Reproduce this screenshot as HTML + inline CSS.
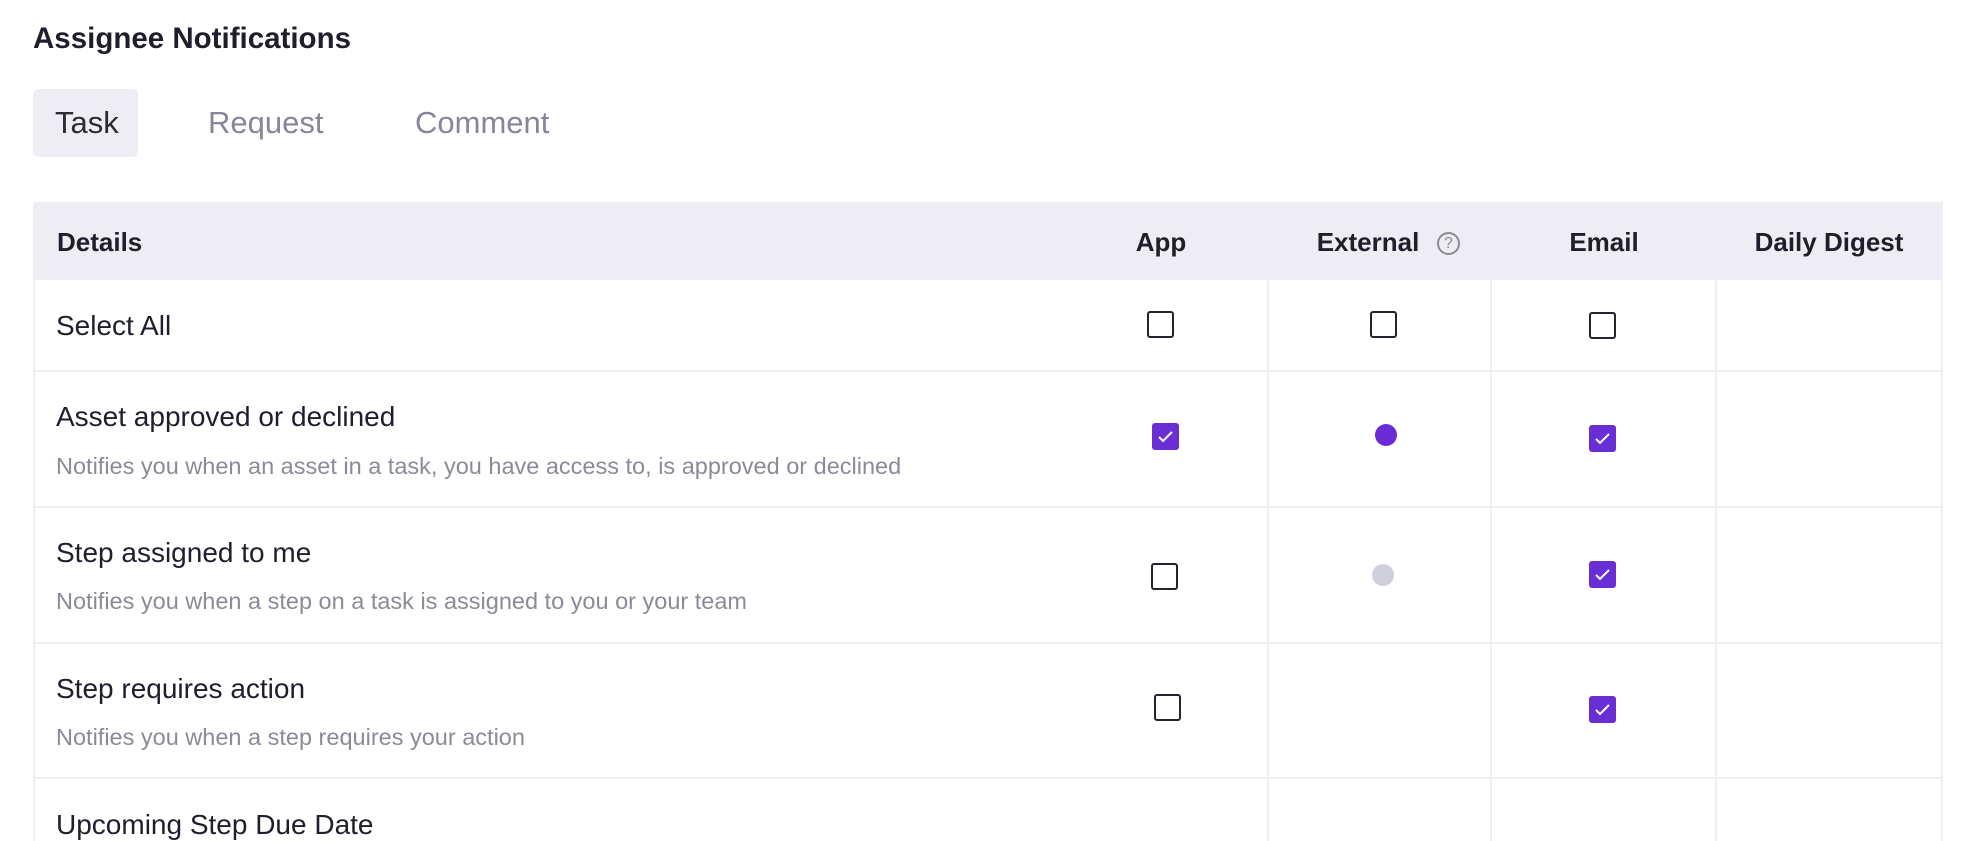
<!DOCTYPE html>
<html><head><meta charset="utf-8"><style>
*{margin:0;padding:0;box-sizing:border-box}
body{width:1968px;height:841px;background:#fff;font-family:"Liberation Sans",sans-serif;color:#1e1e2d;position:relative;overflow:hidden}
.a{position:absolute}
.t{position:absolute;white-space:nowrap}
.cb{position:absolute;width:27px;height:27px;border:2.5px solid #24242f;border-radius:3px;background:#fff}
.ck{position:absolute;width:27px;height:27px;border-radius:3px;background:#6a2fd4}
.ck svg{position:absolute;left:4px;top:4px}
.dot{position:absolute;width:22px;height:22px;border-radius:50%}
.hl{position:absolute;left:33px;width:1910px;height:2px;background:#efeff3}
.vl{position:absolute;top:280px;width:2px;height:561px;background:#efeff3}
.title{font-size:28px;color:#1e1e2d}
.sub{font-size:23.5px;color:#8b8b98}
.hd{font-size:26px;font-weight:bold;color:#1e1e2d;transform:translateX(-50%)}
</style></head><body>
<div class="t" style="left:33px;top:22px;font-size:29.5px;font-weight:bold">Assignee Notifications</div>
<div class="a" style="left:33px;top:89px;width:105px;height:68px;background:#ededf3;border-radius:5px"></div>
<div class="t" style="left:55px;top:105px;font-size:31px;color:#2a2a38">Task</div>
<div class="t" style="left:208px;top:105px;font-size:31px;color:#86869a">Request</div>
<div class="t" style="left:415px;top:105px;font-size:31px;color:#86869a">Comment</div>

<div class="a" style="left:33px;top:202px;width:1910px;height:78px;background:#ededf3;border-radius:3px 3px 0 0"></div>
<div class="a" style="left:33px;top:280px;width:2px;height:561px;background:#efeff3"></div>
<div class="a" style="left:1941px;top:202px;width:2px;height:639px;background:#efeff3"></div>
<div class="t hd" style="top:227px;transform:none;left:57px">Details</div>
<div class="t hd" style="left:1161px;top:227px">App</div>
<div class="t hd" style="left:1368px;top:227px">External</div>
<div class="a" style="left:1437px;top:232px;width:23px;height:23px;border:2px solid #8b8b98;border-radius:50%;font-size:16px;color:#8b8b98;text-align:center;line-height:19px">?</div>
<div class="t hd" style="left:1604px;top:227px">Email</div>
<div class="t hd" style="left:1829px;top:227px">Daily Digest</div>

<div class="vl" style="left:1267px"></div>
<div class="vl" style="left:1490px"></div>
<div class="vl" style="left:1715px"></div>
<div class="hl" style="top:370px"></div>
<div class="hl" style="top:506px"></div>
<div class="hl" style="top:642px"></div>
<div class="hl" style="top:777px"></div>

<div class="t title" style="left:56px;top:310px">Select All</div>
<div class="t title" style="left:56px;top:401px">Asset approved or declined</div>
<div class="t sub" style="left:56px;top:453px">Notifies you when an asset in a task, you have access to, is approved or declined</div>
<div class="t title" style="left:56px;top:537px">Step assigned to me</div>
<div class="t sub" style="left:56px;top:588px">Notifies you when a step on a task is assigned to you or your team</div>
<div class="t title" style="left:56px;top:673px">Step requires action</div>
<div class="t sub" style="left:56px;top:724px">Notifies you when a step requires your action</div>
<div class="t title" style="left:56px;top:809px">Upcoming Step Due Date</div>

<div class="cb" style="left:1147px;top:311px"></div>
<div class="cb" style="left:1370px;top:311px"></div>
<div class="cb" style="left:1589px;top:312px"></div>

<div class="ck" style="left:1152px;top:423px"><svg width="19" height="19" viewBox="0 0 19 19"><path d="M3 10l4 4 9-9" stroke="#fff" stroke-width="2" fill="none"/></svg></div>
<div class="dot" style="left:1375px;top:424px;background:#6a2bd6"></div>
<div class="ck" style="left:1589px;top:425px"><svg width="19" height="19" viewBox="0 0 19 19"><path d="M3 10l4 4 9-9" stroke="#fff" stroke-width="2" fill="none"/></svg></div>

<div class="cb" style="left:1151px;top:563px"></div>
<div class="dot" style="left:1372px;top:564px;background:#d0d0dc"></div>
<div class="ck" style="left:1589px;top:561px"><svg width="19" height="19" viewBox="0 0 19 19"><path d="M3 10l4 4 9-9" stroke="#fff" stroke-width="2" fill="none"/></svg></div>

<div class="cb" style="left:1154px;top:694px"></div>
<div class="ck" style="left:1589px;top:696px"><svg width="19" height="19" viewBox="0 0 19 19"><path d="M3 10l4 4 9-9" stroke="#fff" stroke-width="2" fill="none"/></svg></div>
</body></html>
